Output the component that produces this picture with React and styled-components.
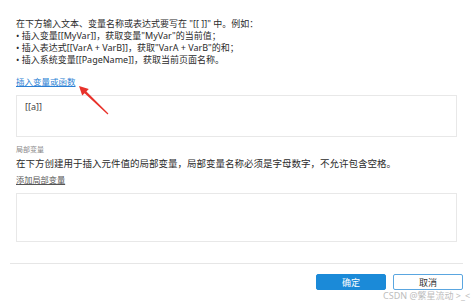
import React from 'react';
import styled, { createGlobalStyle } from 'styled-components';

const GlobalStyle = createGlobalStyle`
  html, body {
    margin: 0;
    padding: 0;
    background: #ffffff;
  }
  body {
    font-family: "Noto Sans", "Noto Sans CJK SC", sans-serif;
    color: #2b2b2b;
  }
`;

export default function App() {
  return (
    <>
      <GlobalStyle />
      <Page>
        <Body>
          <Intro>
            <Line>在下方输入文本、变量名称或表达式要写在 "[[ ]]" 中。例如：</Line>
            <Line>• 插入变量[[MyVar]]，获取变量"MyVar"的当前值；</Line>
            <Line>• 插入表达式[[VarA + VarB]]，获取"VarA + VarB"的和；</Line>
            <Line>• 插入系统变量[[PageName]]，获取当前页面名称。</Line>
          </Intro>
          <LinkText>插入变量或函数</LinkText>
          <TextBox height={42}>[[a]]</TextBox>

          <SectionLabel>局部变量</SectionLabel>
          <Description>在下方创建用于插入元件值的局部变量，局部变量名称必须是字母数字，不允许包含空格。</Description>
          <AddLink>添加局部变量</AddLink>
          <TextBox height={49} />
        </Body>

        <Footer>
          <Button primary>确定</Button>
          <Button>取消</Button>
        </Footer>

        {/* red annotation arrow pointing at the link */}
        <Arrow width="40" height="36" viewBox="0 0 40 36">
          <polygon
            points="3,2 12.8,5 10.4,7.4 32.4,29.6 31.6,30.4 8.6,9.2 6.2,11.6"
            fill="#e8322b"
          />
        </Arrow>
        <Watermark>CSDN @繁星流动 &gt;_&lt;</Watermark>
      </Page>
    </>
  );
}

const Page = styled.div`
  position: relative;
  width: 474px;
  height: 301px;
  overflow: hidden;
  background: #ffffff;
`;

const Body = styled.div`
  display: flex;
  flex-direction: column;
  padding: 18px 17px 0 16px;
`;

const Intro = styled.div`
  display: flex;
  flex-direction: column;
`;

const Line = styled.div`
  font-size: 9px;
  line-height: 12px;
  height: 12px;
  white-space: nowrap;
  color: #2b2b2b;
`;

const LinkText = styled.div`
  margin-top: 10px;
  font-size: 8.5px;
  line-height: 12px;
  color: #2a7fd4;
  text-decoration: underline;
  align-self: flex-start;
`;

const TextBox = styled.div`
  box-sizing: border-box;
  height: ${(props) => props.height}px;
  margin-top: 7px;
  padding: 5px 8px;
  border: 1px solid #e8e8e8;
  font-size: 9px;
  line-height: 12px;
  color: #444444;
`;

const SectionLabel = styled.div`
  margin-top: 8px;
  font-size: 7px;
  line-height: 10px;
  color: #888888;
`;

const Description = styled.div`
  margin-top: 2px;
  font-size: 9.5px;
  line-height: 14px;
  white-space: nowrap;
  color: #2b2b2b;
`;

const AddLink = styled.div`
  margin-top: 3px;
  font-size: 8.2px;
  line-height: 12px;
  color: #555555;
  text-decoration: underline;
  align-self: flex-start;
`;

const Footer = styled.div`
  display: flex;
  justify-content: flex-end;
  gap: 7px;
  margin: 21px 11px 0 10px;
  padding-top: 10px;
  border-top: 1px solid #e6e6e6;
`;

const Button = styled.div`
  box-sizing: border-box;
  width: 70px;
  height: 16px;
  display: flex;
  align-items: center;
  justify-content: center;
  font-size: 9px;
  border-radius: 2px;
  background: ${(props) => (props.primary ? '#1b8ad8' : '#ffffff')};
  color: ${(props) => (props.primary ? '#ffffff' : '#333333')};
  border: 1px solid ${(props) => (props.primary ? '#1b8ad8' : '#5aa6e0')};
`;

const Arrow = styled.svg`
  position: absolute;
  left: 76px;
  top: 84px;
`;

const Watermark = styled.div`
  position: absolute;
  left: 383px;
  top: 291px;
  font-size: 9px;
  line-height: 10px;
  white-space: nowrap;
  color: #bdbdbd;
`;
